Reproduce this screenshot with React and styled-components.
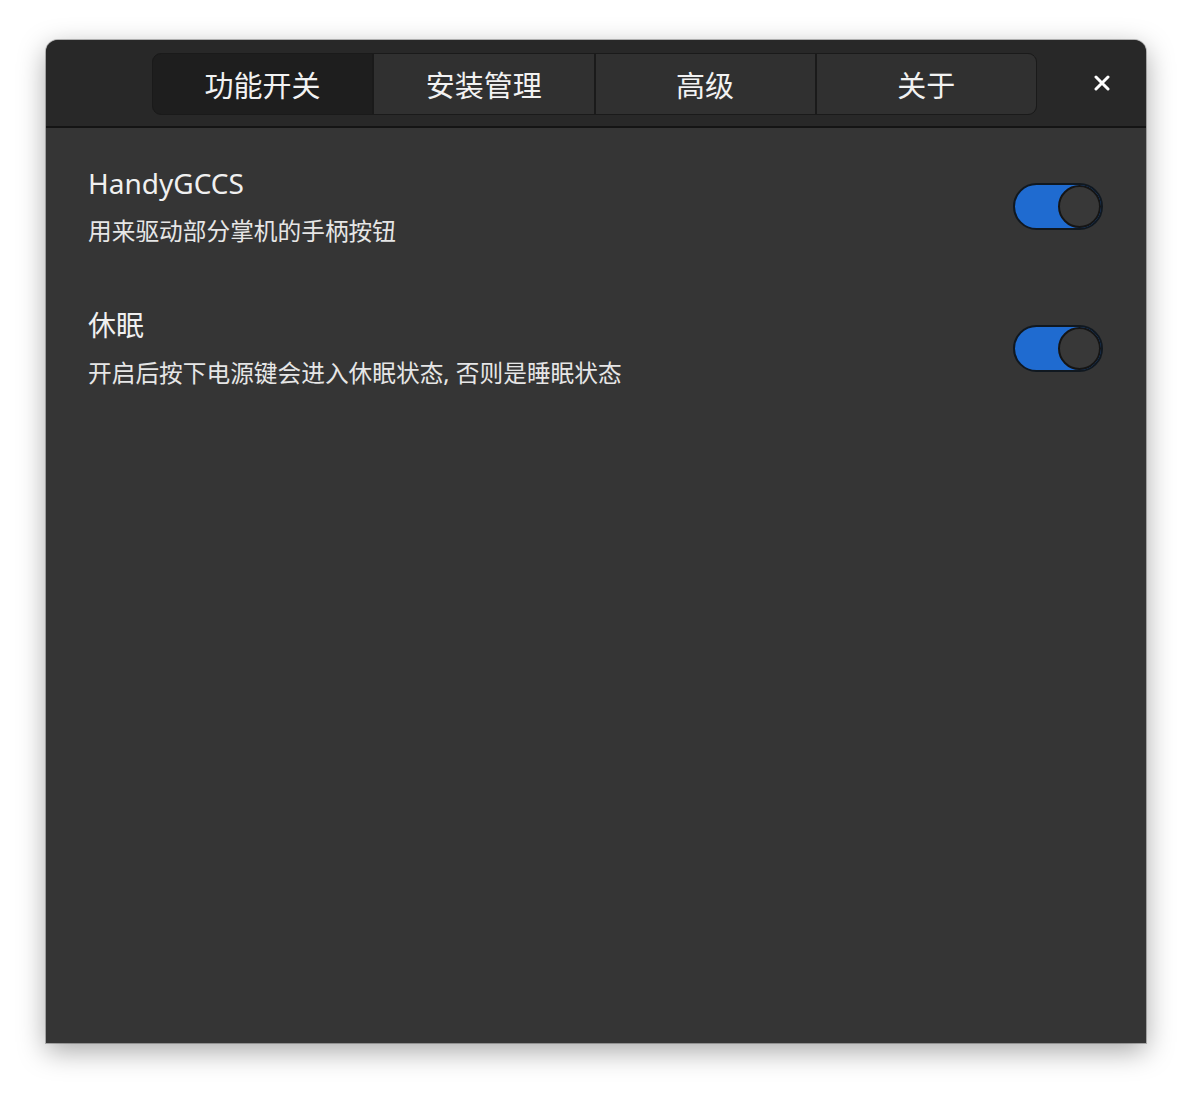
import React, { useState } from 'react';
import styled, { createGlobalStyle } from 'styled-components';

const GlobalStyle = createGlobalStyle`
    html, body {
        margin: 0;
        padding: 0;
        background: #ffffff;
        font-family: "Noto Sans", "Noto Sans CJK SC", sans-serif;
    }
`;

const Page = styled.div`
    padding: 40px 46px 52px 46px;
`;

const Window = styled.div`
    width: 1100px;
    height: 1003px;
    display: flex;
    flex-direction: column;
    background-color: #353535;
    border-radius: 12px 12px 0 0;
    overflow: hidden;
    box-shadow: 0 0 0 1px rgba(0, 0, 0, 0.25), 0 8px 28px rgba(0, 0, 0, 0.35);
`;

const HeaderBar = styled.div`
    height: 88px;
    flex-shrink: 0;
    display: flex;
    align-items: center;
    background-color: #282828;
    border-bottom: 2px solid #141414;
    padding-left: 106px;
    padding-top: 2px;
    box-sizing: border-box;
    position: relative;
`;

const TabGroup = styled.div`
    display: flex;
    width: 885px;
    height: 62px;
    border: 1px solid #1a1a1a;
    border-radius: 9px;
    overflow: hidden;
    background-color: #1a1a1a;
    gap: 2px;
    box-sizing: border-box;
`;

const Tab = styled.div`
    flex: 1;
    display: flex;
    align-items: center;
    justify-content: center;
    background-color: ${p => (p.active ? '#1e1e1e' : '#303030')};
    color: #f2f2f2;
    font-size: 29px;
    user-select: none;
`;

const CloseButton = styled.div`
    position: absolute;
    right: 32px;
    top: 50%;
    transform: translateY(-50%);
    width: 24px;
    height: 24px;
    display: flex;
    align-items: center;
    justify-content: center;
`;

const Content = styled.div`
    flex: 1;
    display: flex;
    flex-direction: column;
    padding: 35px 42px 0 42px;
    gap: 56px;
`;

const Row = styled.div`
    display: flex;
    align-items: center;
    justify-content: space-between;
`;

const TextBlock = styled.div`
    display: flex;
    flex-direction: column;
    gap: 10px;
`;

const Title = styled.div`
    color: #f0f0f0;
    font-size: 28px;
    line-height: 40px;
`;

const Subtitle = styled.div`
    color: #e6e6e6;
    font-size: 23.7px;
    line-height: 36px;
`;

const SwitchTrack = styled.div`
    width: 90px;
    height: 47px;
    box-sizing: border-box;
    border-radius: 24px;
    border: 2px solid #101820;
    background-color: ${p => (p.on ? '#1f6bd0' : '#2a2a2a')};
    display: flex;
    justify-content: ${p => (p.on ? 'flex-end' : 'flex-start')};
    margin-right: 1px;
    cursor: pointer;
`;

const SwitchKnob = styled.div`
    width: 43px;
    height: 43px;
    box-sizing: border-box;
    border-radius: 50%;
    border: 2px solid #151515;
    background-color: #383838;
`;

const settings = [
    { title: 'HandyGCCS', desc: '用来驱动部分掌机的手柄按钮' },
    { title: '休眠', desc: '开启后按下电源键会进入休眠状态, 否则是睡眠状态' }
];

const tabs = ['功能开关', '安装管理', '高级', '关于'];

const Toggle = () => {
    const [on, setOn] = useState(true);
    return (
        <SwitchTrack on={on} onClick={() => setOn(!on)}>
            <SwitchKnob/>
        </SwitchTrack>
    );
};

const App = () => {
    const [activeTab, setActiveTab] = useState(0);

    return (
        <Page>
            <GlobalStyle/>
            <Window>
                <HeaderBar>
                    <TabGroup>
                        {tabs.map((t, i) => (
                            <Tab key={t} active={i === activeTab} onClick={() => setActiveTab(i)}>
                                {t}
                            </Tab>
                        ))}
                    </TabGroup>
                    <CloseButton>
                        <svg width="16" height="16" viewBox="0 0 16 16">
                            <path d="M2 2 L14 14 M14 2 L2 14" stroke="#ffffff" strokeWidth="3" strokeLinecap="round"/>
                        </svg>
                    </CloseButton>
                </HeaderBar>
                <Content>
                    {settings.map(s => (
                        <Row key={s.title}>
                            <TextBlock>
                                <Title>{s.title}</Title>
                                <Subtitle>{s.desc}</Subtitle>
                            </TextBlock>
                            <Toggle/>
                        </Row>
                    ))}
                </Content>
            </Window>
        </Page>
    );
};

export default App;
